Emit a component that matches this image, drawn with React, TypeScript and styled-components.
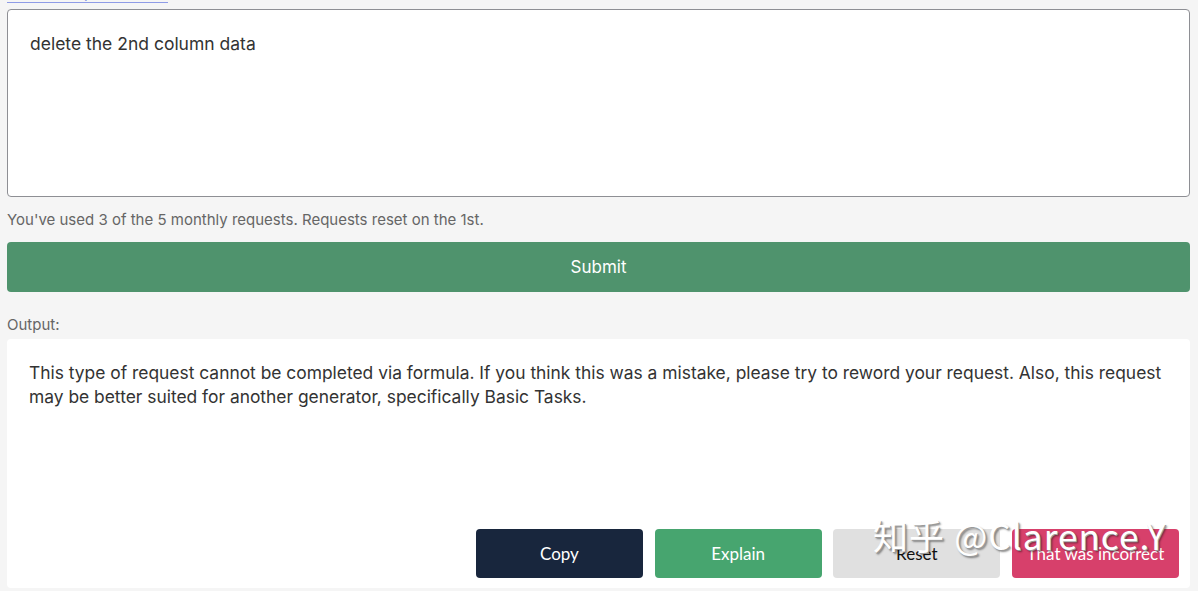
import styled, { createGlobalStyle } from "styled-components";

const GlobalStyle = createGlobalStyle`
  html, body {
    margin: 0;
    padding: 0;
    background: #f5f5f5;
    overflow: hidden;
  }
  body {
    font-family: Inter, "Noto Sans", sans-serif;
    color: #333;
  }
`;

const Page = styled.div`
  display: flex;
  flex-direction: column;
  padding: 0 8px 0 7px;
  height: 591px;
  box-sizing: border-box;
`;

const TopLink = styled.a`
  display: block;
  width: 161px;
  height: 2px;
  overflow: hidden;
  font-size: 15px;
  line-height: 20px;
  color: #7b8ee0;
  text-decoration: none;
  border-bottom: 1.5px solid #8e9be6;
`;

const LinkText = styled.span`
  display: block;
  margin-top: -17px;
`;

const Prompt = styled.textarea`
  margin-top: 5.5px;
  height: 188px;
  box-sizing: border-box;
  resize: none;
  border: 1.5px solid #8e8f94;
  border-radius: 4px;
  background: #fff;
  padding: 22px 22px;
  font-family: inherit;
  font-size: 17.5px;
  line-height: 24px;
  color: #333;
  outline: none;
`;

const Hint = styled.p`
  margin: 13px 0 0;
  font-size: 15px;
  line-height: 20px;
  color: #666;
`;

const SubmitButton = styled.button`
  margin-top: 12px;
  height: 50px;
  border: none;
  border-radius: 4px;
  background: #4f936d;
  color: #fff;
  font-family: inherit;
  font-size: 17px;
  cursor: pointer;
`;

const Label = styled.div`
  margin-top: 23px;
  font-size: 15px;
  line-height: 20px;
  color: #666;
`;

const OutputBox = styled.div`
  position: relative;
  margin-top: 4px;
  height: 249px;
  box-sizing: border-box;
  background: #fff;
  border-radius: 4px;
  padding: 22px 14px 10px 22px;
  display: flex;
  flex-direction: column;
`;

const OutputText = styled.p`
  margin: 0;
  font-size: 17.4px;
  line-height: 24px;
  color: #333;
  flex: 1;
`;

const Actions = styled.div`
  display: flex;
  justify-content: flex-end;
  gap: 11.7px;
  margin-right: -3px;
`;

const tones = {
  dark: { bg: "#18263d", fg: "#fff" },
  green: { bg: "#47a56f", fg: "#fff" },
  grey: { bg: "#e0e0e0", fg: "#111" },
  pink: { bg: "#d7406b", fg: "#fff" },
};

const ActionButton = styled.button<{ $tone: keyof typeof tones }>`
  width: 167px;
  height: 49px;
  border: none;
  border-radius: 4px;
  background: ${(p) => tones[p.$tone].bg};
  color: ${(p) => tones[p.$tone].fg};
  font-family: Lato, "Open Sans", sans-serif;
  font-size: 17px;
  cursor: pointer;
`;

const Watermark = styled.div`
  position: absolute;
  left: 866px;
  top: 176px;
  font-family: "Noto Sans CJK SC", "Noto Sans", sans-serif;
  font-size: 35px;
  line-height: 40px;
  color: #fff;
  letter-spacing: 1.1px;
  white-space: nowrap;
  pointer-events: none;
  text-shadow: 1px 1px 0 #9a9a9a, 2px 2px 2px rgba(0, 0, 0, 0.45);
`;

export default function App() {
  return (
    <>
      <GlobalStyle />
      <Page>
        <TopLink href="#">
          <LinkText>View example requests</LinkText>
        </TopLink>
        <Prompt defaultValue="delete the 2nd column data" />
        <Hint>You've used 3 of the 5 monthly requests. Requests reset on the 1st.</Hint>
        <SubmitButton>Submit</SubmitButton>
        <Label>Output:</Label>
        <OutputBox>
          <OutputText>
            This type of request cannot be completed via formula. If you think this was a mistake,
            please try to reword your request. Also, this request may be better suited for another
            generator, specifically Basic Tasks.
          </OutputText>
          <Actions>
            <ActionButton $tone="dark">Copy</ActionButton>
            <ActionButton $tone="green">Explain</ActionButton>
            <ActionButton $tone="grey">Reset</ActionButton>
            <ActionButton $tone="pink">That was incorrect</ActionButton>
          </Actions>
          <Watermark>知乎 @Clarence.Y</Watermark>
        </OutputBox>
      </Page>
    </>
  );
}
